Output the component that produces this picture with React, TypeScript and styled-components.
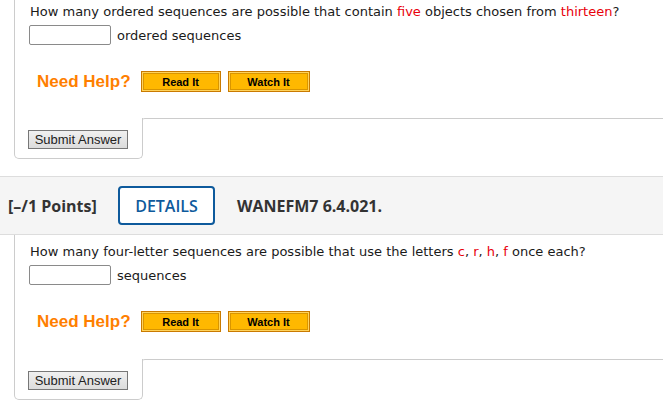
import styled, { createGlobalStyle } from 'styled-components';

const GlobalStyle = createGlobalStyle`
  html, body {
    margin: 0;
    padding: 0;
    background: #ffffff;
  }
  body {
    font-family: "DejaVu Sans", Verdana, sans-serif;
    color: #222;
  }
`;

const Page = styled.div`
  display: flex;
  flex-direction: column;
  width: 663px;
  overflow: hidden;
`;

const Card = styled.section`
  display: flex;
  flex-direction: column;
  margin-left: 14px;
`;

const Body = styled.div<{ $h: number; $top: number }>`
  box-sizing: border-box;
  display: flex;
  flex-direction: column;
  height: ${(p) => p.$h}px;
  padding: ${(p) => p.$top}px 0 0 15px;
  border-left: 1px solid #cccccc;
`;

const Question = styled.div`
  font-size: 13px;
  line-height: 16px;
  color: #1a1a1a;
  white-space: nowrap;
`;

const Red = styled.span`
  color: #e8000b;
`;

const AnswerRow = styled.div`
  display: flex;
  align-items: center;
  gap: 6px;
  margin-top: 5px;
  margin-left: -1px;
  font-size: 13px;
  color: #1a1a1a;
`;

const AnswerInput = styled.input`
  box-sizing: border-box;
  width: 82px;
  height: 20px;
  margin: 0;
  border: 1px solid #8a8a8a;
  border-radius: 2px;
  background: #fff;
`;

const HelpRow = styled.div`
  display: flex;
  align-items: center;
  gap: 7px;
  margin-top: 26px;
  padding-left: 7px;
`;

const NeedHelp = styled.span`
  font-family: "Liberation Sans", Arial, sans-serif;
  font-weight: bold;
  font-size: 17px;
  color: #ff7f00;
  margin-right: 3px;
`;

const HelpButton = styled.button<{ $w: number }>`
  box-sizing: border-box;
  width: ${(p) => p.$w}px;
  height: 21px;
  padding: 0;
  margin: 0;
  border: 1px solid #c97a00;
  background: #ffb800;
  box-shadow: inset 0 0 0 1px #ffd35c, inset 0 0 0 2px #d99500;
  font-family: "Liberation Sans", Arial, sans-serif;
  font-weight: bold;
  font-size: 11px;
  color: #000;
  cursor: pointer;
`;

const Footer = styled.div`
  display: flex;
`;

const SubmitCell = styled.div`
  box-sizing: border-box;
  width: 129px;
  height: 41px;
  display: flex;
  align-items: flex-start;
  padding: 12px 0 0 13px;
  border: 1px solid #cccccc;
  border-top: none;
  border-radius: 0 0 5px 5px;
`;

const Spacer = styled.div`
  flex: 1;
  border-top: 1px solid #cccccc;
  border-top-left-radius: 3px;
  margin-left: -1px;
`;

const SubmitButton = styled.button`
  box-sizing: border-box;
  width: 100px;
  height: 19px;
  padding: 0;
  margin: 0;
  border: 1px solid #777;
  background: linear-gradient(#f0f0f0, #dcdcdc);
  font-family: "Liberation Sans", Arial, sans-serif;
  font-size: 13px;
  color: #222;
`;

const Band = styled.div`
  display: flex;
  align-items: center;
  height: 57px;
  margin-top: 17px;
  padding-left: 8px;
  background: #f5f5f5;
  border-top: 1px solid #dddddd;
  border-bottom: 1px solid #dddddd;
  font-family: "Open Sans", sans-serif;
  font-weight: 700;
  font-size: 16px;
  color: #333;
`;

const Points = styled.span`
  width: 110px;
`;

const Details = styled.span`
  box-sizing: border-box;
  display: flex;
  align-items: center;
  justify-content: center;
  width: 97px;
  height: 39px;
  border: 2px solid #0e5a9c;
  border-radius: 4px;
  background: #fff;
  color: #0e5a9c;
  font-weight: 600;
  margin-right: 22px;
`;

interface QuestionProps {
  top: number;
  height: number;
  unit: string;
  children: React.ReactNode;
}

function QuestionBlock(props: QuestionProps) {
  return (
    <Card>
      <Body $h={props.height} $top={props.top}>
        <Question>{props.children}</Question>
        <AnswerRow>
          <AnswerInput type="text" />
          <span>{props.unit}</span>
        </AnswerRow>
        <HelpRow>
          <NeedHelp>Need Help?</NeedHelp>
          <HelpButton $w={80}>Read It</HelpButton>
          <HelpButton $w={82}>Watch It</HelpButton>
        </HelpRow>
      </Body>
      <Footer>
        <SubmitCell>
          <SubmitButton>Submit Answer</SubmitButton>
        </SubmitCell>
        <Spacer />
      </Footer>
    </Card>
  );
}

export default function App() {
  return (
    <Page>
      <GlobalStyle />
      <QuestionBlock top={4} height={118} unit="ordered sequences">
        How many ordered sequences are possible that contain <Red>five</Red>{' '}
        objects chosen from <Red>thirteen</Red>?
      </QuestionBlock>
      <Band>
        <Points>[–/1 Points]</Points>
        <Details>DETAILS</Details>
        <span>WANEFM7 6.4.021.</span>
      </Band>
      <QuestionBlock top={9} height={124} unit="sequences">
        How many four-letter sequences are possible that use the letters{' '}
        <Red>c</Red>, <Red>r</Red>, <Red>h</Red>, <Red>f</Red> once each?
      </QuestionBlock>
    </Page>
  );
}
